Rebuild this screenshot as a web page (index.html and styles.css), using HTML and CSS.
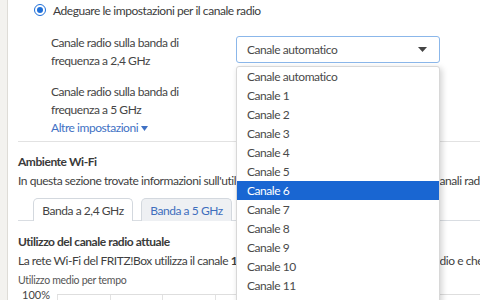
FILE: index.html
```html
<!DOCTYPE html>
<html lang="it">
<head>
<meta charset="utf-8">
<title>Wi-Fi</title>
<link rel="stylesheet" href="styles.css">
</head>
<body>
<div class="page">
  <div class="rail"></div>
  <main class="main">
    <label class="radio-row">
      <span class="radio"><span class="radio-dot"></span></span>
      <span>Adeguare le impostazioni per il canale radio</span>
    </label>

    <div class="field field-first">
      <div class="field-label">Canale radio sulla banda di<br>frequenza a 2,4 GHz</div>
      <div class="select-wrap">
        <div class="select select-open">
          <span>Canale automatico</span>
          <svg class="caret" width="9" height="5" viewBox="0 0 9 5"><path d="M0 0h9L4.5 5z" fill="#444"/></svg>
        </div>
        <ul class="options">
          <li>Canale automatico</li>
          <li>Canale 1</li>
          <li>Canale 2</li>
          <li>Canale 3</li>
          <li>Canale 4</li>
          <li>Canale 5</li>
          <li class="active">Canale 6</li>
          <li>Canale 7</li>
          <li>Canale 8</li>
          <li>Canale 9</li>
          <li>Canale 10</li>
          <li>Canale 11</li>
          <li>Canale 12</li>
        </ul>
      </div>
    </div>

    <div class="field field-second">
      <div class="field-label">Canale radio sulla banda di<br>frequenza a 5 GHz</div>
      <div class="select">
        <span>Canale automatico</span>
      </div>
    </div>
    <a class="more">Altre impostazioni <svg width="7" height="5" viewBox="0 0 7 5"><path d="M0 0h7L3.5 5z" fill="#3f71c4"/></svg></a>

    <hr class="divider">

    <h3 class="heading">Ambiente Wi-Fi</h3>
    <p class="text">In questa sezione trovate informazioni sull'utilizzo della frequenza da parte dei specifici canali radio e delle reti Wi-Fi vicine.</p>

    <div class="tabs">
      <div class="tab tab-active">Banda a 2,4 GHz</div>
      <div class="tab">Banda a 5 GHz</div>
    </div>

    <h3 class="heading heading-2">Utilizzo del canale radio attuale</h3>
    <p class="text">La rete Wi-Fi del FRITZ!Box utilizza il canale <b>11.</b> Il grafico indica l'uso di ciascun canale radio e che reti lo usano.</p>

    <div class="chart-caption">Utilizzo medio per tempo</div>
    <div class="chart">
      <div class="axis">100%</div>
      <div class="plot">
        <span></span><span></span><span></span><span></span><span></span><span></span><span></span><span></span>
      </div>
    </div>
  </main>
</div>
</body>
</html>
```

FILE: styles.css
```css
html, body {
  margin: 0;
  padding: 0;
  background: #fff;
}
body {
  font-family: Lato, "Liberation Sans", sans-serif;
  font-size: 12px;
  letter-spacing: -0.45px;
  color: #3c3c3c;
}
.page {
  display: flex;
  width: 480px;
  height: 300px;
  overflow: hidden;
}
.rail {
  flex: 0 0 7px;
  background: #f3f2ef;
  border-right: 1px solid #dedcd7;
}
.main {
  flex: 1;
  min-width: 0;
  padding-left: 10px;
}
.radio-row {
  display: flex;
  align-items: center;
  gap: 7px;
  padding-left: 16px;
  height: 20px;
}
.radio {
  width: 10px;
  height: 10px;
  border: 1.5px solid #1f6fd8;
  border-radius: 50%;
  display: flex;
  align-items: center;
  justify-content: center;
}
.radio-dot {
  width: 6px;
  height: 6px;
  border-radius: 50%;
  background: #1f6fd8;
}
.field {
  display: flex;
  padding-left: 33px;
}
.field-first {
  margin-top: 14px;
}
.field-second {
  margin-top: 13px;
}
.field-label {
  width: 185px;
  line-height: 18px;
  color: #454545;
}
.select-wrap {
  position: relative;
}
.select {
  box-sizing: border-box;
  width: 204px;
  height: 27px;
  border: 1px solid #c9ccd1;
  border-radius: 3px;
  padding: 0 12px 0 10px;
  display: flex;
  align-items: center;
  justify-content: space-between;
  color: #4a4a4a;
  margin-top: 2px;
}
.select-open {
  border-color: #8bb7ea;
}
.caret {
  display: block;
}
.options {
  position: absolute;
  left: 0;
  top: 32px;
  width: 204px;
  box-sizing: border-box;
  margin: 0;
  padding: 0;
  list-style: none;
  background: #fff;
  border: 1px solid #d8d8d8;
  border-radius: 3px 3px 0 0;
  box-shadow: 2px 2px 6px rgba(0,0,0,0.18);
  z-index: 5;
}
.options li {
  height: 19px;
  line-height: 19px;
  padding-left: 10px;
  color: #4a4a4a;
}
.options li.active {
  background: #1966d2;
  color: #fff;
}
.more {
  display: inline-flex;
  align-items: center;
  gap: 3px;
  margin-left: 33px;
  color: #3f71c4;
  line-height: 18px;
}
.divider {
  border: 0;
  border-top: 1px solid #e2e2e2;
  margin: 4px 0 0 0;
}
.heading {
  margin: 11px 0 0 0;
  font-size: 12px;
  font-weight: 700;
  color: #3a3a3a;
  line-height: 18px;
}
.heading-2 {
  margin-top: 12px;
}
.text {
  margin: 1px 0 0 0;
  line-height: 18px;
  white-space: nowrap;
  color: #3f3f3f;
}
.tabs {
  display: flex;
  gap: 8px;
  margin-top: 8px;
  padding-left: 15px;
  border-bottom: 1px solid #d9dde2;
  height: 22px;
}
.tab {
  box-sizing: border-box;
  height: 23px;
  border: 1px solid #d3d8de;
  border-bottom: 0;
  border-radius: 5px 5px 0 0;
  background: #eef0f3;
  color: #3e6ebd;
  display: flex;
  align-items: center;
  justify-content: center;
  width: 91px;
}
.tab-active {
  width: 100px;
  background: #fff;
  color: #444;
}
.chart-caption {
  margin-top: 2px;
  font-size: 10.5px;
  letter-spacing: -0.3px;
  color: #555;
  line-height: 16px;
}
.chart {
  display: flex;
  margin-top: 0;
}
.axis {
  width: 32px;
  text-align: right;
  font-size: 11px;
  letter-spacing: 0;
  color: #444;
  line-height: 14px;
  padding-right: 7px;
}
.plot {
  flex: 1;
  display: grid;
  grid-template-columns: repeat(8, 52.5px);
  border-top: 1px solid #dedede;
  margin-top: 6px;
  height: 20px;
}
.plot span {
  border-left: 1px solid #e2e2e2;
}
```
